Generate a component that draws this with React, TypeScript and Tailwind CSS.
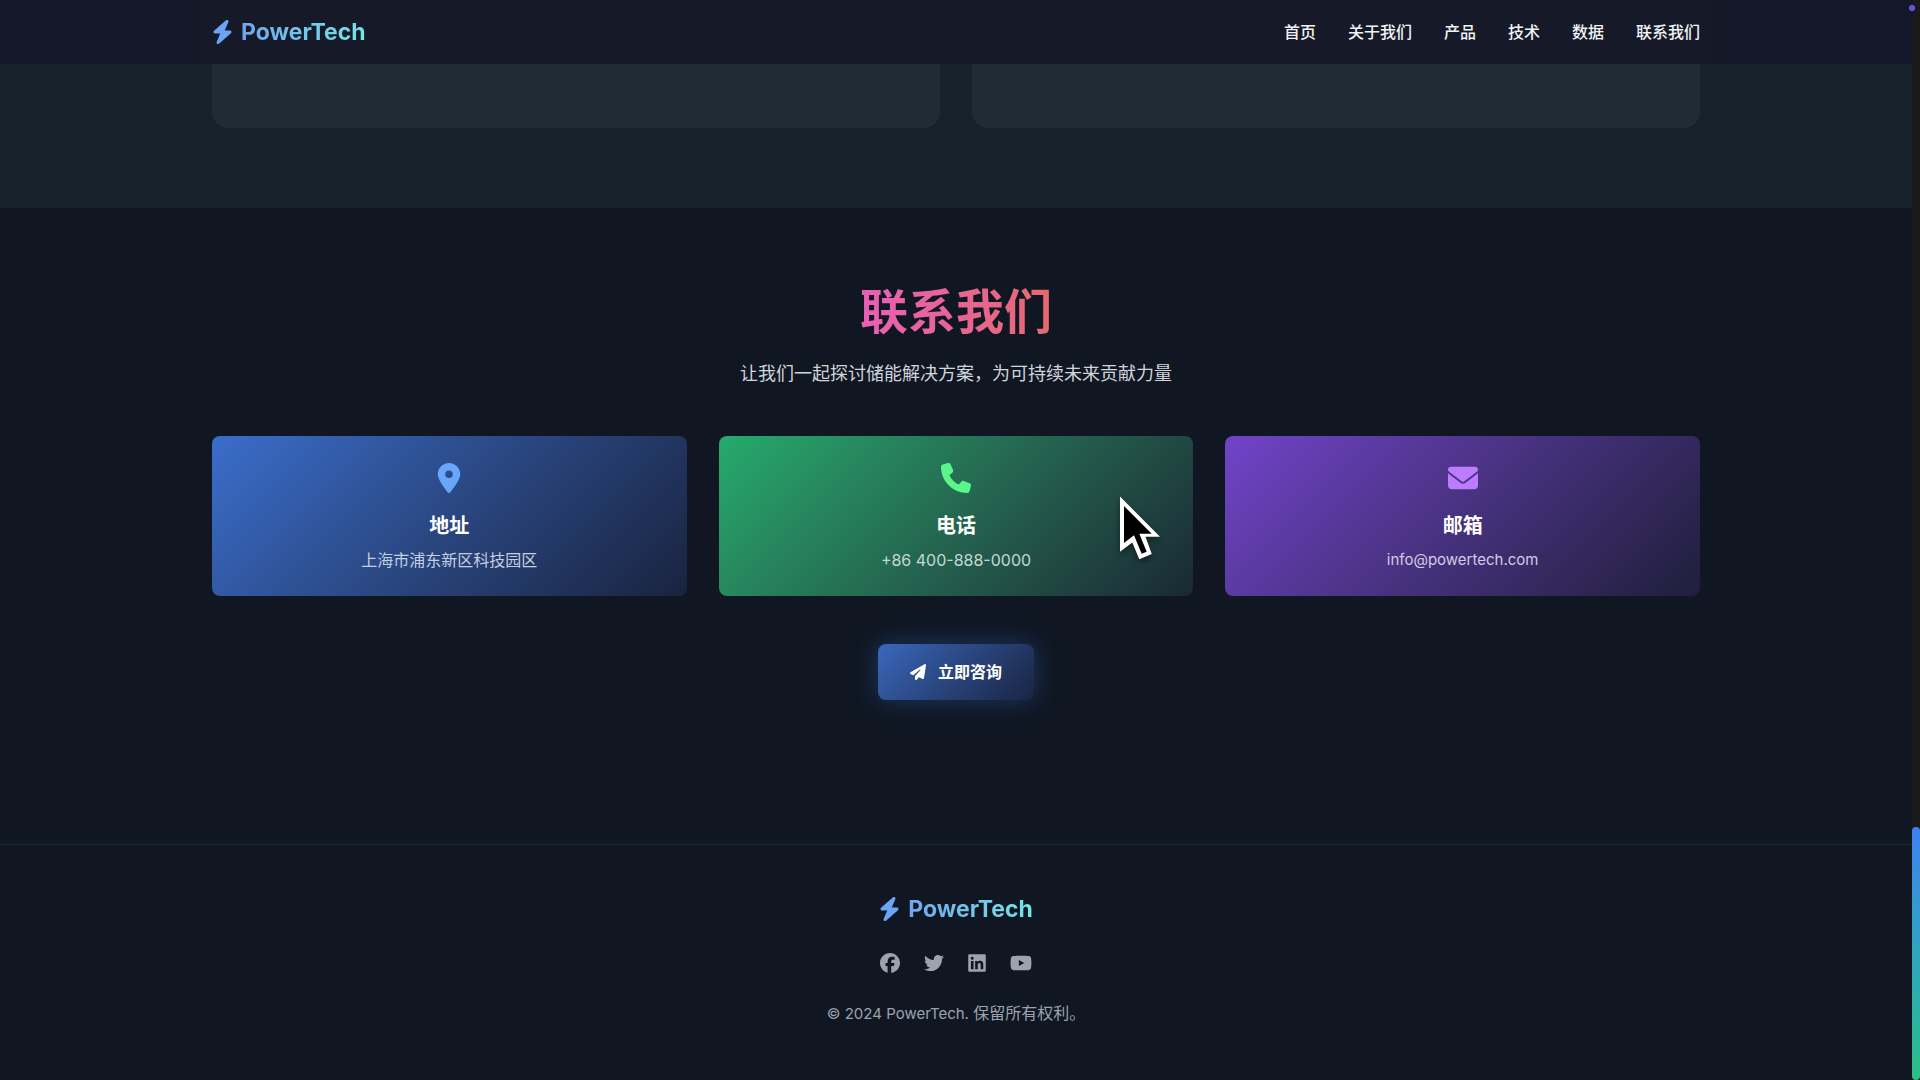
import type { IconType } from "react-icons";
import {
    FaBolt,
    FaEnvelope,
    FaFacebook,
    FaLinkedin,
    FaLocationDot,
    FaPaperPlane,
    FaPhone,
    FaTwitter,
    FaYoutube,
} from "react-icons/fa6";

const navLinks = ["首页", "关于我们", "产品", "技术", "数据", "联系我们"];

type Contact = {
    title: string;
    value: string;
    icon: IconType;
    iconClass: string;
    cardClass: string;
    textClass: string;
};

const contacts: Contact[] = [
    {
        title: "地址",
        value: "上海市浦东新区科技园区",
        icon: FaLocationDot,
        iconClass: "text-[#68a6fb]",
        cardClass: "from-[#3a6ecb] to-[#19233f]",
        textClass: "text-base text-[#c5cfe2]",
    },
    {
        title: "电话",
        value: "+86 400-888-0000",
        icon: FaPhone,
        iconClass: "text-[#5af58b]",
        cardClass: "from-[#24ab6c] to-[#192933]",
        textClass: "text-base text-[#c3d9d3]",
    },
    {
        title: "邮箱",
        value: "info@powertech.com",
        icon: FaEnvelope,
        iconClass: "text-[#bd7cff]",
        cardClass: "from-[#7243c9] to-[#201e3c]",
        textClass: "text-[15px] leading-6 text-[#d3cbe6]",
    },
];

const socials = [
    { name: "Facebook", icon: FaFacebook, iconClass: "w-5" },
    { name: "Twitter", icon: FaTwitter, iconClass: "w-5" },
    { name: "LinkedIn", icon: FaLinkedin, iconClass: "w-[18px]" },
    { name: "YouTube", icon: FaYoutube, iconClass: "w-[22px]" },
];

const Logo = () => (
    <a
        href="#home"
        className="flex items-center gap-2 text-[23px] leading-8 font-bold"
    >
        <FaBolt className="h-6 w-[21px] text-[#6ba3f5]" />
        <span className="bg-linear-to-r from-[#6fa5ee] to-[#74e6e4] bg-clip-text text-transparent">
            PowerTech
        </span>
    </a>
);

const Navbar = () => (
    <nav className="bg-[#121827]">
        <div className="mx-auto flex h-16 max-w-[1536px] items-center justify-between bg-[linear-gradient(to_right,transparent,#161928_24px,#161928_calc(100%-24px),transparent)] px-6">
            <Logo />
            <div className="flex gap-8 font-medium text-[#f1f3f6]">
                {navLinks.map((link) => (
                    <a key={link} href={`#${link}`}>
                        {link}
                    </a>
                ))}
            </div>
        </div>
    </nav>
);

const ContactCard = ({ contact }: { contact: Contact }) => {
    const Icon = contact.icon;

    return (
        <div
            className={`flex flex-col items-center rounded-lg bg-linear-135 p-6 text-center ${contact.cardClass}`}
        >
            <div className="mb-4 flex h-9 items-center">
                <Icon className={`size-[30px] ${contact.iconClass}`} />
            </div>
            <h3 className="mb-2 text-xl font-bold text-white">
                {contact.title}
            </h3>
            <p className={contact.textClass}>{contact.value}</p>
        </div>
    );
};

const Footer = () => (
    <footer className="border-t border-[#1e2633] py-12">
        <div className="flex flex-col items-center gap-6">
            <Logo />
            <div className="flex h-7 items-center gap-6 text-[#9ca3af]">
                {socials.map(({ name, icon: Icon, iconClass }) => (
                    <a key={name} href={`#${name}`} aria-label={name}>
                        <Icon className={`h-5 ${iconClass}`} />
                    </a>
                ))}
            </div>
            <p className="text-[#9ca3af]">
                <span className="text-[15px]">© 2024 PowerTech. </span>
                保留所有权利。
            </p>
        </div>
    </footer>
);

const Scrollbar = () => (
    <div className="sticky top-0 flex h-screen w-2 shrink-0 flex-col justify-end bg-[#1a1a1a]">
        <div className="h-[253px] rounded-sm bg-linear-to-b from-[#4080f0] to-[#2bc083]" />
        <span className="absolute top-[5px] -left-[3px] size-1.5 rounded-full bg-[#6a59c4] ring-2 ring-[#191545]" />
    </div>
);

const Cursor = () => (
    <svg
        viewBox="0 0 48 72"
        className="pointer-events-none absolute top-[492px] left-[1116px] h-[72px] w-12 drop-shadow-[0_3px_3px_rgba(0,0,0,0.45)]"
        aria-hidden="true"
    >
        <path
            fill="#fff"
            d="M4 4.5 44 44.7H29.5L35.8 62 23.3 67.3 16.3 50.6 4 59.8Z"
        />
        <path
            fill="#000"
            d="M8 14 35.7 41.7H23.3L30.7 59.7 25.7 61.7 18 43.3 8 51Z"
        />
    </svg>
);

export default function App() {
    return (
        <div className="relative flex min-h-screen bg-[#101723] font-[Inter,'Noto_Sans_CJK_SC',sans-serif] text-base">
            <div className="min-w-0 flex-1">
                <Navbar />

                {/* Data section */}
                <section className="bg-[#18222d] pb-20">
                    <div className="mx-auto grid max-w-[1536px] grid-cols-2 gap-8 px-6">
                        <div className="h-16 rounded-b-2xl bg-[#212b35]" />
                        <div className="h-16 rounded-b-2xl bg-[#212b35]" />
                    </div>
                </section>

                {/* Contact section */}
                <section className="pt-20 pb-36">
                    <div className="mx-auto flex max-w-[1536px] flex-col items-center px-6">
                        <h2 className="mb-6 bg-linear-to-r from-[#e85fb5] to-[#e5696e] bg-clip-text text-5xl leading-12 font-bold text-transparent">
                            联系我们
                        </h2>
                        <p className="mb-12 text-lg text-[#d1d5db]">
                            让我们一起探讨储能解决方案，为可持续未来贡献力量
                        </p>
                        <div className="mb-12 grid w-full grid-cols-3 gap-8">
                            {contacts.map((contact) => (
                                <ContactCard
                                    key={contact.title}
                                    contact={contact}
                                />
                            ))}
                        </div>
                        <button
                            type="button"
                            className="flex h-14 items-center gap-3 rounded-lg bg-linear-135 from-[#3a68bd] to-[#192543] px-8 font-bold text-white shadow-[0_0_24px_rgba(59,130,246,0.3)]"
                        >
                            <FaPaperPlane className="size-4" />
                            立即咨询
                        </button>
                    </div>
                </section>

                <Footer />
            </div>
            <Scrollbar />
            <Cursor />
        </div>
    );
}
